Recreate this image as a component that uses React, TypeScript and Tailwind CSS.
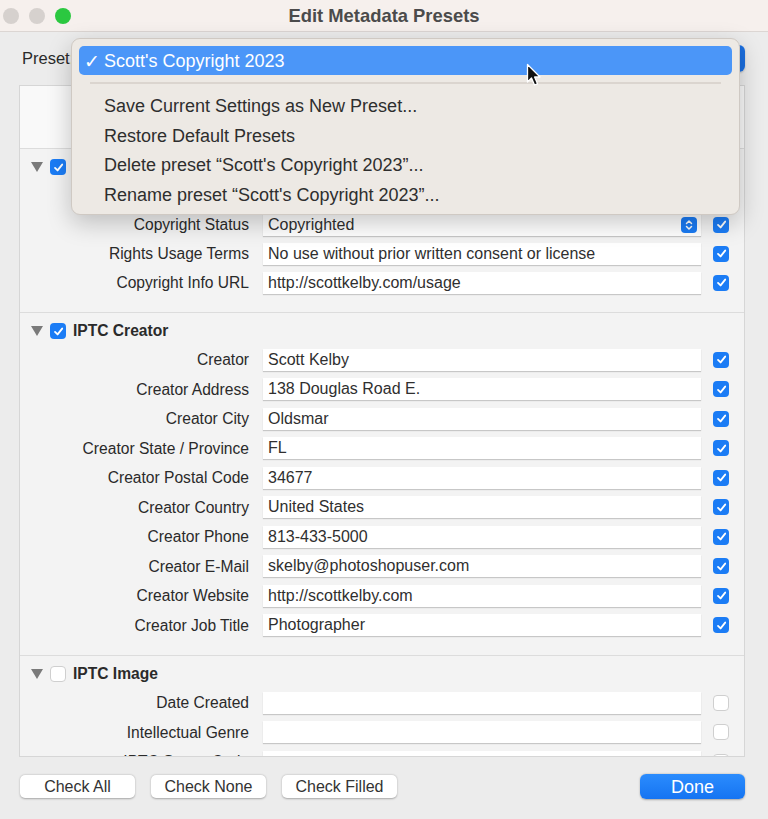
import React from "react";

const font = { fontFamily: '"Liberation Sans", Arial, sans-serif' };

function Check({ on }: { on: boolean }) {
  if (!on) {
    return <div className="w-[16px] h-[16px] rounded-[4px] bg-white border border-[#cfcfcf] shrink-0" />;
  }
  return (
    <div className="w-[16px] h-[16px] rounded-[4px] bg-[#1b7cf5] flex items-center justify-center shrink-0">
      <svg width="11" height="11" viewBox="0 0 12 12">
        <path d="M2.2 6.4 L5 9.2 L10 2.8" fill="none" stroke="white" strokeWidth="2" strokeLinecap="round" strokeLinejoin="round" />
      </svg>
    </div>
  );
}

function Triangle() {
  return (
    <svg width="12" height="10" viewBox="0 0 12 10" className="shrink-0">
      <path d="M0 0 H12 L6 10 Z" fill="#7a7a7a" />
    </svg>
  );
}

interface Field {
  label: string;
  value: string;
  checked: boolean;
  popup?: boolean;
}

function Row({ f, h }: { f: Field; h: string }) {
  return (
    <div className={`flex items-center ${h}`}>
      <div className="w-[243px] text-right text-[15.6px] text-[#2a2a2a] pr-[14px] whitespace-nowrap">{f.label}</div>
      <div className="w-[438px] h-[22px] bg-white shadow-[0_1px_1px_rgba(0,0,0,0.18)] flex items-center pl-[5px] text-[16px] text-[#2f2f2f] relative">
        <span className="whitespace-nowrap">{f.value}</span>
        {f.popup && (
          <div className="absolute right-[4px] top-[3px] w-[16px] h-[16px] rounded-[4px] bg-[#1b7cf5] flex items-center justify-center">
            <svg width="8" height="12" viewBox="0 0 8 12">
              <path d="M1.5 4.5 L4 2 L6.5 4.5 M1.5 7.5 L4 10 L6.5 7.5" fill="none" stroke="white" strokeWidth="1.5" strokeLinecap="round" strokeLinejoin="round" />
            </svg>
          </div>
        )}
      </div>
      <div className="pl-[12px]">
        <Check on={f.checked} />
      </div>
    </div>
  );
}

function Section({ title, checked, fields, rowH, last }: { title: string; checked: boolean; fields: Field[]; rowH: string; last?: boolean }) {
  return (
    <div className={`pt-[4px] pb-[15px] ${last ? "" : "border-b border-[#dcdcdc]"}`}>
      <div className="h-[28px] flex items-center pl-[11px] gap-[7px]">
        <Triangle />
        <Check on={checked} />
        <span className="text-[15.6px] font-bold text-[#2a2a2a]">{title}</span>
      </div>
      {fields.map((f) => (
        <Row key={f.label} f={f} h={rowH} />
      ))}
    </div>
  );
}

const copyright: Field[] = [
  { label: "Copyright", value: "© 2023 Scott Kelby", checked: true },
  { label: "Copyright Status", value: "Copyrighted", checked: true, popup: true },
  { label: "Rights Usage Terms", value: "No use without prior written consent or license", checked: true },
  { label: "Copyright Info URL", value: "http://scottkelby.com/usage", checked: true },
];

const creator: Field[] = [
  { label: "Creator", value: "Scott Kelby", checked: true },
  { label: "Creator Address", value: "138 Douglas Road E.", checked: true },
  { label: "Creator City", value: "Oldsmar", checked: true },
  { label: "Creator State / Province", value: "FL", checked: true },
  { label: "Creator Postal Code", value: "34677", checked: true },
  { label: "Creator Country", value: "United States", checked: true },
  { label: "Creator Phone", value: "813-433-5000", checked: true },
  { label: "Creator E-Mail", value: "skelby@photoshopuser.com", checked: true },
  { label: "Creator Website", value: "http://scottkelby.com", checked: true },
  { label: "Creator Job Title", value: "Photographer", checked: true },
];

const image: Field[] = [
  { label: "Date Created", value: "", checked: false },
  { label: "Intellectual Genre", value: "", checked: false },
  { label: "IPTC Scene Code", value: "", checked: false },
];

const menuItems = [
  "Save Current Settings as New Preset...",
  "Restore Default Presets",
  "Delete preset \u201CScott's Copyright 2023\u201D...",
  "Rename preset \u201CScott's Copyright 2023\u201D...",
];

export default function App() {
  return (
    <div className="w-[768px] h-[819px] bg-[#ececec] relative overflow-hidden flex flex-col" style={font}>
      {/* title bar */}
      <div className="h-[32px] bg-[#f6f0ed] border-b border-[#dcd6d3] flex items-center relative shrink-0">
        <div className="flex gap-[10px] pl-[3px]">
          <div className="w-[16px] h-[16px] rounded-full bg-[#d6d1ce]" />
          <div className="w-[16px] h-[16px] rounded-full bg-[#d6d1ce]" />
          <div className="w-[16px] h-[16px] rounded-full bg-[#2bc840]" />
        </div>
        <div className="absolute inset-0 flex items-center justify-center text-[18.4px] font-bold text-[#4b4b4b]">Edit Metadata Presets</div>
      </div>

      {/* preset row */}
      <div className="h-[53px] flex items-center pl-[22px] pr-[23px] gap-[6px] shrink-0">
        <span className="text-[16.5px] text-[#2a2a2a]">Preset:</span>
        <div className="flex-1 h-[27px] rounded-[6px] bg-white shadow-[0_1px_2px_rgba(0,0,0,0.2)] flex justify-end">
          <div className="w-[20px] h-[27px] rounded-[6px] bg-[#1b6fe0]" />
        </div>
      </div>

      {/* scroll panel */}
      <div className="ml-[19px] mr-[23px] h-[672px] bg-[#f3f3f3] border border-[#d6d6d6] overflow-hidden shrink-0">
        <div className="h-[63px] bg-[#f9f9f9] border-b border-[#dcdcdc]" />
        <Section title="IPTC Copyright" checked fields={copyright} rowH="h-[29px]" />
        <Section title="IPTC Creator" checked fields={creator} rowH="h-[29.5px]" />
        <Section title="IPTC Image" checked={false} fields={image} rowH="h-[29.5px]" last />
      </div>

      {/* buttons */}
      <div className="flex items-center pl-[20px] pr-[23px] pt-[17px] gap-[16px]">
        <button className="w-[115px] h-[23px] bg-white rounded-[5px] shadow-[0_0.5px_2px_rgba(0,0,0,0.3)] text-[16px] text-[#333]">Check All</button>
        <button className="w-[115px] h-[23px] bg-white rounded-[5px] shadow-[0_0.5px_2px_rgba(0,0,0,0.3)] text-[16px] text-[#333]">Check None</button>
        <button className="w-[115px] h-[23px] bg-white rounded-[5px] shadow-[0_0.5px_2px_rgba(0,0,0,0.3)] text-[16px] text-[#333]">Check Filled</button>
        <div className="flex-1" />
        <button className="w-[105px] h-[25px] rounded-[6px] bg-gradient-to-b from-[#2b8cfd] to-[#1574f2] shadow-[0_0.5px_2px_rgba(0,0,0,0.3)] text-[18px] text-white">Done</button>
      </div>

      {/* dropdown menu */}
      <div className="absolute left-[71px] top-[38px] w-[669px] h-[177px] rounded-[9px] bg-[#ede9e4] border border-[#cfc9c3] shadow-[0_8px_24px_rgba(0,0,0,0.22)] px-[7px] pt-[7px]">
        <div className="h-[29px] pt-[2px] rounded-[5px] bg-[#4b96f8] flex items-center text-white text-[18px]">
          <span className="w-[25px] pl-[5px] text-[19px] leading-none">✓</span>
          <span>Scott's Copyright 2023</span>
        </div>
        <div className="mx-[11px] mt-[7px] h-[2px] bg-[#dbd5cf]" />
        <div className="pt-[8px]">
          {menuItems.map((m) => (
            <div key={m} className="h-[29.6px] flex items-center pl-[25px] text-[18px] text-[#2e2e2e] whitespace-nowrap">
              {m}
            </div>
          ))}
        </div>
      </div>

      {/* cursor */}
      <svg className="absolute left-[526px] top-[63px]" width="16" height="24" viewBox="0 0 16 24">
        <path d="M1.5 1.5 L1.5 19 L5.5 15 L8.5 22 L11.5 20.8 L8.6 14 L14 14 Z" fill="#111" stroke="white" strokeWidth="1.3" strokeLinejoin="round" />
      </svg>
    </div>
  );
}
